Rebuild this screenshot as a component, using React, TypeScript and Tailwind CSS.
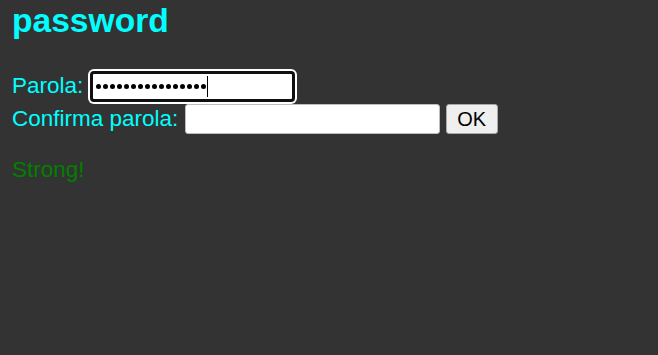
import React from "react";

export default function App() {
  const dots = Array.from({ length: 16 });
  return (
    <div className="min-h-[355px] w-full bg-[#333333] px-[12px] pt-[2px] font-['Liberation_Sans',Arial,sans-serif] text-[22.5px] text-[#00ffff]">
      <h1 className="h-[38px] text-[33.6px] font-bold leading-[38px]">password</h1>

      <div className="mt-[31px] flex h-[31px] items-center">
        <span className="mb-[2px] leading-[26px]">Parola:&nbsp;</span>
        <div
          role="textbox"
          className="flex h-[31px] w-[205px] items-center rounded-[4px] border-[3px] border-[#101010] bg-white pl-[3px] shadow-[0_0_0_2px_#ffffff]"
        >
          <div className="flex items-center gap-[2px]">
            {dots.map((_, i) => (
              <span key={i} className="block h-[5px] w-[5px] rounded-full bg-black" />
            ))}
          </div>
          <span className="ml-[1px] block h-[21px] w-[1.5px] bg-black" />
        </div>
      </div>

      <div className="mt-[2px] flex h-[30px] items-center">
        <span className="mb-[1px] leading-[26px]">Confirma parola:&nbsp;</span>
        <input
          type="password"
          className="h-[30px] w-[255px] rounded-[3px] border border-[#bdbdbd] bg-white px-[3px] text-[20px] text-black outline-none"
        />
        <button className="ml-[6px] h-[30px] w-[52px] rounded-[3px] border border-[#a9a9a9] bg-[#efefef] text-[20px] leading-[26px] text-black">
          OK
        </button>
      </div>

      <p className="mt-[23px] leading-[26px] text-[#008000]">Strong!</p>
    </div>
  );
}
